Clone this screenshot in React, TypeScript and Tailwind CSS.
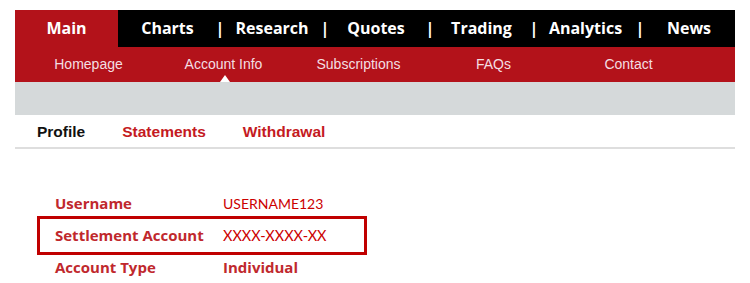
import React from "react";

const topItems: { label: string; w: number; sep?: boolean }[] = [
  { label: "Charts", w: 75 },
  { label: "|", w: 30, sep: true },
  { label: "Research", w: 74 },
  { label: "|", w: 32, sep: true },
  { label: "Quotes", w: 70 },
  { label: "|", w: 38, sep: true },
  { label: "Trading", w: 65 },
  { label: "|", w: 40, sep: true },
  { label: "Analytics", w: 63 },
  { label: "|", w: 46, sep: true },
  { label: "News", w: 52 },
];

const subItems = ["Homepage", "Account Info", "Subscriptions", "FAQs", "Contact"];

export default function App() {
  return (
    <div className="w-[750px] h-[283px] bg-white overflow-hidden pt-[10px] pl-[15px]">
      <div className="w-[720px]">
        {/* Top nav */}
        <div
          className="flex h-[37px] bg-black text-white font-bold text-[16px] items-stretch"
          style={{ fontFamily: '"Open Sans", sans-serif' }}
        >
          <div className="w-[103px] bg-[#b3121a] flex items-center justify-center pb-[1px]">Main</div>
          <div className="w-[12px]" />
          {topItems.map((it, i) => (
            <div
              key={i}
              className="flex items-center justify-center pb-[1px]"
              style={{ width: it.w }}
            >
              {it.label}
            </div>
          ))}
        </div>
        {/* Sub nav */}
        <div
          className="relative h-[35px] bg-[#b3121a] pl-[6px] grid grid-cols-[135px_135px_135px_135px_135px] text-[14px] text-[#f4dfe2]"
          style={{ fontFamily: '"Liberation Sans", Arial, sans-serif' }}
        >
          {subItems.map((s) => (
            <div key={s} className="flex items-center justify-center">
              {s}
            </div>
          ))}
          <div className="absolute left-[205px] bottom-0 w-0 h-0 border-l-[5px] border-r-[5px] border-b-[7px] border-l-transparent border-r-transparent border-b-white" />
        </div>
        {/* Gray band */}
        <div className="h-[33px] bg-[#d5d9da]" />
        {/* Tabs */}
        <div
          className="h-[32px] flex items-center pl-[22px] gap-[37px] font-bold text-[15.5px] pt-[2px]"
          style={{ fontFamily: '"Liberation Sans", Arial, sans-serif' }}
        >
          <span className="text-[#111]">Profile</span>
          <span className="text-[#c41a22]">Statements</span>
          <span className="text-[#c41a22]">Withdrawal</span>
        </div>
        <div className="h-[2px] bg-[#dedede]" />
        {/* Fields */}
        <div className="ml-[22px] mt-[43px] w-[330px] text-[15px]">
          <div className="h-[22px] flex items-center pl-[18px]">
            <span
              className="w-[168px] font-bold text-[#c0282d]"
              style={{ fontFamily: '"Open Sans", sans-serif' }}
            >
              Username
            </span>
            <span
              className="text-[#cc0000] text-[14px]"
              style={{ fontFamily: 'Lato, sans-serif' }}
            >
              USERNAME123
            </span>
          </div>
          <div className="mt-[2px] h-[39px] border-[3px] border-[#c00000] flex items-center pl-[15px]">
            <span
              className="w-[168px] font-bold text-[#c0282d]"
              style={{ fontFamily: '"Open Sans", sans-serif' }}
            >
              Settlement Account
            </span>
            <span
              className="text-[#cc0000] text-[14.5px]"
              style={{ fontFamily: 'Lato, sans-serif' }}
            >
              XXXX-XXXX-XX
            </span>
          </div>
          <div className="mt-[1px] h-[22px] flex items-center pl-[18px]">
            <span
              className="w-[168px] font-bold text-[#c0282d]"
              style={{ fontFamily: '"Open Sans", sans-serif' }}
            >
              Account Type
            </span>
            <span
              className="font-bold text-[#c0282d]"
              style={{ fontFamily: '"Open Sans", sans-serif' }}
            >
              Individual
            </span>
          </div>
        </div>
      </div>
    </div>
  );
}
